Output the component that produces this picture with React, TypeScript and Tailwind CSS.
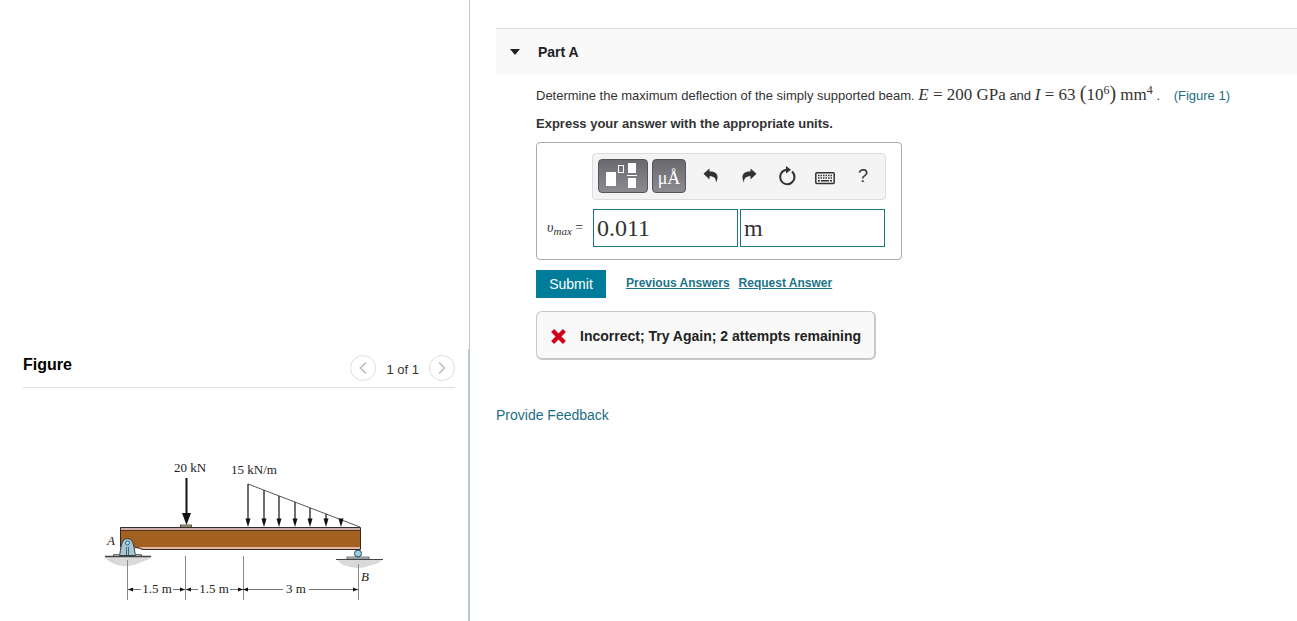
import React, { useState } from "react";
import { ChevronLeft, ChevronRight } from "lucide-react";

const loadArrows = [
  { x: 248, top: 484 },
  { x: 264, top: 490 },
  { x: 279, top: 496 },
  { x: 295, top: 502 },
  { x: 310, top: 508 },
  { x: 326, top: 514 },
  { x: 341, top: 520 },
];

const dimensions = [
  { from: 128, to: 185, label: "1.5 m", x: 157, gap: 16 },
  { from: 186, to: 243, label: "1.5 m", x: 214, gap: 16 },
  { from: 243, to: 358, label: "3 m", x: 296, gap: 13 },
];

function BeamFigure() {
  return (
    <svg
      viewBox="94 450 290 156"
      className="mx-auto h-[156px] w-[290px] font-['Liberation_Serif',serif] text-[13px]"
      fill="#222"
      role="img"
      aria-label="Simply supported beam"
    >
      {/* supports: soil */}
      <path
        d="M105 557H151C147 561 143 561 139 563C132 567 120 567 115 564C111 563 108 561 105 557Z"
        fill="#d9d9d9"
      />
      <path
        d="M338 559H382C380 564 373 564 369 566C362 569 352 568 347 566C342 565 339 563 338 559Z"
        fill="#d9d9d9"
      />
      {/* beam */}
      <path d="M120.500 527.500H360.500V549.500H141L136 547.500H120.500Z" fill="#a3611f" />
      <rect x="121" y="528" width="239" height="2" fill="#cfaeaa" />
      <path d="M121 530.500H360" stroke="#513321" />
      <rect x="139" y="547" width="221" height="2" fill="#e0b8a2" />
      <path
        d="M120.500 547V527.500H360.500V549.500H143Q140 547.500 135 547.500"
        fill="none"
        stroke="#332b28"
      />
      {/* pin at A */}
      <path
        d="M119.500 555.500C121 550 120.500 538.500 127.500 538.500S134 550 135.500 555.500Z"
        fill="#a5c6d3"
        stroke="#303a3e"
      />
      <path d="M113.500 556.500V554.800H119M136 554.800H141.500V556.500" fill="none" stroke="#303a3e" />
      <path d="M126.500 547V555M128.500 547V555" stroke="#50646c" />
      <circle cx="127.500" cy="543" r="2" fill="#b9e0ef" stroke="#286887" />
      <path d="M105 556.500H151" stroke="#444" strokeWidth="1.500" />
      {/* roller at B */}
      <rect x="347" y="557" width="22" height="2" fill="#bfd3d8" stroke="#444" strokeWidth=".7" />
      <circle cx="358" cy="553.500" r="3.500" fill="#9dccdf" stroke="#28495a" />
      <path d="M336 559.500H383" stroke="#444" />
      {/* point load */}
      <rect x="180.500" y="525" width="11" height="2" fill="#d8ba8d" stroke="#333" strokeWidth=".8" />
      <path d="M186.500 478V516" stroke="#111" strokeWidth="2" />
      <path d="M182 513H191L186.500 525Z" fill="#111" />
      {/* distributed load */}
      <path d="M248 484L360 527" stroke="#444" strokeWidth=".9" />
      {loadArrows.map(({ x, top }) => (
        <g key={x}>
          <path d={`M${x} ${top}V522`} stroke="#222" strokeWidth="1.300" />
          <path d={`M${x - 2.5} 518.5H${x + 2.5}L${x} 527Z`} fill="#111" />
        </g>
      ))}
      {/* dimension lines */}
      <path
        d="M127.500 560V600M185.500 556V600M243.500 556V600M358.500 564V600"
        stroke="#888"
      />
      {dimensions.map(({ from, to, label, x, gap }) => (
        <g key={from}>
          <path
            d={`M${from} 589.5H${x - gap}M${x + gap} 589.5H${to}`}
            stroke="#555"
            strokeWidth=".8"
          />
          <path
            d={`M${from} 589.5l5 -2v4zM${to} 589.5l-5 -2v4z`}
            fill="#111"
          />
          <text x={x} y="593" textAnchor="middle">
            {label}
          </text>
        </g>
      ))}
      <text x="190" y="472" textAnchor="middle">20 kN</text>
      <text x="254" y="474" textAnchor="middle">15 kN/m</text>
      <text x="107" y="545" fontStyle="italic">A</text>
      <text x="361" y="581" fontStyle="italic">B</text>
    </svg>
  );
}

function UndoIcon({ className = "" }: { className?: string }) {
  return (
    <svg viewBox="0 0 16 16" className={`size-4 ${className}`} fill="currentColor">
      <path d="M.5 5.800L6.500 .5V3.500C12 3.200 15 6 14.500 10C14.300 11.800 13.800 13.200 13 14.500C13 10.500 11.500 8.300 6.500 8.300V11.500Z" />
    </svg>
  );
}

function ResetIcon() {
  return (
    <svg viewBox="0 0 20 20" className="size-5" fill="none">
      <path
        d="M15 5.500A7.200 7.200 0 1 1 9.500 3.800"
        stroke="currentColor"
        strokeWidth="2"
      />
      <path d="M9 0L14 3.800L9 7.500Z" fill="currentColor" />
    </svg>
  );
}

function KeyboardIcon() {
  return (
    <svg viewBox="0 0 20 14" className="h-[14px] w-5" fill="none" stroke="currentColor">
      <rect x=".8" y="1.800" width="18.400" height="10.700" rx="1" strokeWidth="1.500" />
      <path d="M3 4.500H17M3 7H17" strokeWidth="1.500" strokeDasharray="1.500 1" />
      <path d="M3 9.800H5M6 9.800H14M15 9.800H17" strokeWidth="1.500" />
    </svg>
  );
}

function TemplateIcon() {
  return (
    <svg viewBox="0 0 34 26" className="h-[26px] w-[34px] shrink-0" fill="#fff">
      <rect x="0" y="9" width="10" height="14" />
      <rect x="12.500" y="2.500" width="5" height="7" fill="none" stroke="#fff" />
      <rect x="22" y="0" width="8" height="10" />
      <rect x="21" y="12" width="10" height="1" />
      <rect x="22" y="15" width="8" height="10" />
    </svg>
  );
}

const darkButton =
  "flex h-[34px] items-center justify-center rounded border border-[#55555a] bg-linear-to-b from-[#69696e] to-[#8b8b90] text-white";
const toolButton = "flex h-[34px] w-[38px] items-center justify-center text-[#333]";
const field =
  "h-[38px] w-full min-w-0 border border-[#1b7488] bg-white px-[3px] font-['Liberation_Serif',serif] text-2xl text-[#333] outline-none";
const pager =
  "flex size-[26px] items-center justify-center rounded-full border border-[#dedede] text-[#bbb]";
const math = "font-['Liberation_Serif',serif] text-[17px]";

export default function App() {
  const [open, setOpen] = useState(true);
  const [value, setValue] = useState("0.011");
  const [units, setUnits] = useState("m");

  return (
    <div className="grid min-h-screen grid-cols-[470fr_827fr] bg-white font-['Liberation_Sans',Arial,sans-serif] text-[13px] text-[#333]">
      <aside className="flex min-w-0 flex-col">
        <div className="h-[349px] border-r border-[#c3c8d4]" />
        <section className="grow border-r-2 border-[#b9c7d3] pr-[13px] pl-[23px]">
          <div className="flex h-[39px] items-center justify-between border-b border-[#ddd]">
            <h2 className="pb-[6px] text-base font-bold text-black">Figure</h2>
            <div className="flex items-center">
              <button type="button" className={pager} aria-label="Previous figure">
                <ChevronLeft className="size-5" />
              </button>
              <span className="px-[10px] pt-[3px]">1 of 1</span>
              <button type="button" className={pager} aria-label="Next figure">
                <ChevronRight className="size-5" />
              </button>
            </div>
          </div>
          <div className="pt-[62px]">
            <BeamFigure />
          </div>
        </section>
      </aside>

      <main className="min-w-0 pt-7 pl-[26px]">
        <button
          type="button"
          onClick={() => setOpen(!open)}
          aria-expanded={open}
          className="flex h-[46px] w-full items-center gap-[18px] border-t border-[#ddd] bg-[#f9f9f9] pl-[14px] text-sm font-bold text-[#222]"
        >
          <svg viewBox="0 0 10 6" className="h-[6px] w-[10px]" fill="currentColor">
            <path d="M0 0H10L5 6Z" />
          </svg>
          Part A
        </button>

        {open && (
          <div className="pt-[9px] pl-10">
            <p className="leading-6">
              Determine the maximum deflection of the simply supported beam.{" "}
              <span className={math}>
                <i>E</i> = 200 GPa
              </span>{" "}
              and{" "}
              <span className={math}>
                <i>I</i> = 63 <span className="text-xl leading-none">(</span>10
                <sup className="text-xs">6</sup>
                <span className="text-xl leading-none">)</span> mm
                <sup className="text-xs">4</sup>
              </span>{" "}
              .{" "}
              <a href="#figure" className="ml-[10px] text-[#1b6e85]">
                (Figure 1)
              </a>
            </p>
            <p className="pt-1 leading-6 font-bold">
              Express your answer with the appropriate units.
            </p>

            <div className="mt-[6px] w-fit rounded border border-[#aaa] pt-[10px] pr-[15px] pb-3 pl-[10px]">
              <div className="ml-[45px] flex h-[47px] items-start gap-1 rounded border border-[#ddd] bg-[#f4f4f4] pt-[5px] pr-[3px] pl-[5px]">
                <button type="button" className={`w-[50px] ${darkButton}`} aria-label="Templates">
                  <TemplateIcon />
                </button>
                <button
                  type="button"
                  className={`w-[34px] pt-1 font-['Liberation_Serif',serif] text-lg ${darkButton}`}
                >
                  μÅ
                </button>
                <div className="flex pl-[2px]">
                  <button type="button" className={toolButton} aria-label="Undo">
                    <UndoIcon />
                  </button>
                  <button type="button" className={toolButton} aria-label="Redo">
                    <UndoIcon className="-scale-x-100" />
                  </button>
                  <button type="button" className={toolButton} aria-label="Reset">
                    <ResetIcon />
                  </button>
                  <button type="button" className={`pt-1 ${toolButton}`} aria-label="Keyboard shortcuts">
                    <KeyboardIcon />
                  </button>
                  <button type="button" className={`text-lg ${toolButton}`}>
                    ?
                  </button>
                </div>
              </div>
              <div className="mt-[9px] flex items-center">
                <label
                  htmlFor="answer"
                  className="w-[46px] shrink-0 font-['Liberation_Serif',serif] text-sm whitespace-nowrap"
                >
                  <i>
                    υ<sub className="text-[11px]">max</sub>
                  </i>{" "}
                  =
                </label>
                <div className="grid grid-cols-[145px_145px] gap-[2px]">
                  <input
                    id="answer"
                    className={field}
                    value={value}
                    onChange={(e) => setValue(e.target.value)}
                  />
                  <input
                    aria-label="Units"
                    className={field}
                    value={units}
                    onChange={(e) => setUnits(e.target.value)}
                  />
                </div>
              </div>
            </div>

            <div className="mt-[10px] flex items-center text-xs font-bold text-[#1b7488]">
              <button
                type="button"
                className="mr-5 h-7 w-[70px] bg-[#007c9b] text-sm font-normal text-white"
              >
                Submit
              </button>
              <a href="#previous" className="mr-[9px] pb-[2px] underline">
                Previous Answers
              </a>
              <a href="#request" className="pb-[2px] underline">
                Request Answer
              </a>
            </div>

            <div className="mt-[13px] flex h-[49px] w-fit items-center gap-[14px] rounded-md border border-r-2 border-b-2 border-[#c8c8c8] bg-[#f9f9f9] pt-[2px] pr-[13px] pl-[14px] text-sm font-bold text-[#222]">
              <svg viewBox="0 0 14 14" className="size-[15px]" stroke="#d0021b" strokeWidth="4">
                <path d="M1.500 1.500L12.500 12.500M12.500 1.500L1.500 12.500" />
              </svg>
              Incorrect; Try Again; 2 attempts remaining
            </div>
          </div>
        )}

        <a href="#feedback" className="mt-[45px] inline-block text-sm text-[#1b6e85]">
          Provide Feedback
        </a>
      </main>
    </div>
  );
}
